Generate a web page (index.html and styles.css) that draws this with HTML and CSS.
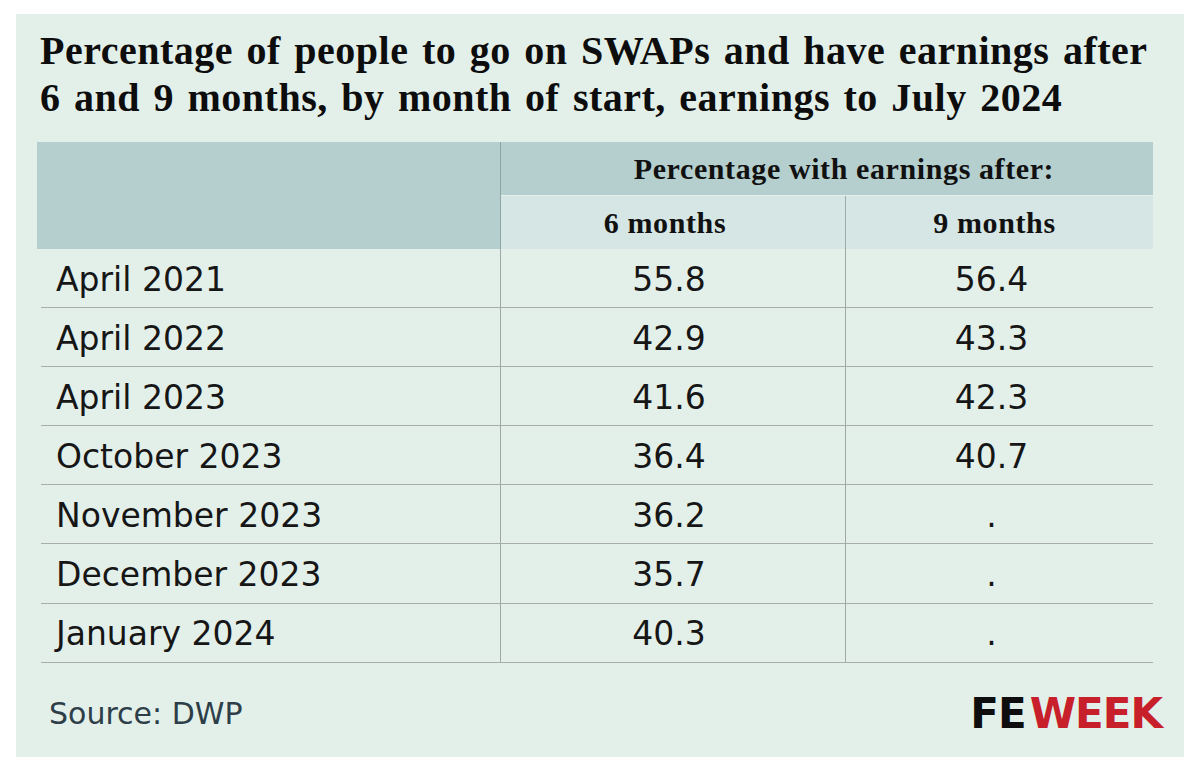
FILE: index.html
```html
<!DOCTYPE html>
<html>
<head>
<meta charset="utf-8">
<link rel="stylesheet" href="styles.css">
</head>
<body>
<div class="panel">
  <h1 class="title">Percentage of people to go on SWAPs and have earnings after<br>6 and 9 months, by month of start, earnings to July 2024</h1>
  <div class="table">
    <div class="h-blank"></div>
    <div class="h-group">Percentage with earnings after:</div>
    <div class="h-sub h-six">6 months</div>
    <div class="h-sub h-last">9 months</div>

    <div class="c first">April 2021</div><div class="c num">55.8</div><div class="c num last">56.4</div>
    <div class="c first">April 2022</div><div class="c num">42.9</div><div class="c num last">43.3</div>
    <div class="c first">April 2023</div><div class="c num">41.6</div><div class="c num last">42.3</div>
    <div class="c first">October 2023</div><div class="c num">36.4</div><div class="c num last">40.7</div>
    <div class="c first">November 2023</div><div class="c num">36.2</div><div class="c num last">.</div>
    <div class="c first">December 2023</div><div class="c num">35.7</div><div class="c num last">.</div>
    <div class="c first">January 2024</div><div class="c num">40.3</div><div class="c num last">.</div>
  </div>
  <div class="footer">
    <span class="source">Source: DWP</span>
    <span class="logo"><span class="fe">FE</span><span class="week">WEEK</span></span>
  </div>
</div>
</body>
</html>
```

FILE: styles.css
```css
html, body {
  margin: 0;
  padding: 0;
  background: #ffffff;
}
.panel {
  margin: 14px 0 0 16px;
  width: 1168px;
  height: 743px;
  background: #e3f0ea;
  box-sizing: border-box;
  padding: 13px 31px 0 21px;
}
.title {
  margin: 0 0 0 3px;
  font-family: "Liberation Serif", serif;
  font-weight: bold;
  font-size: 40px;
  line-height: 47px;
  letter-spacing: 0.5px;
  word-spacing: 3px;
  color: #0d0d0d;
  white-space: nowrap;
}
.table {
  margin-top: 21px;
  display: grid;
  grid-template-columns: 464px 345px 307px;
  grid-template-rows: 53px 54px;
  grid-auto-rows: 59.1px;
  font-family: "DejaVu Sans", sans-serif;
  color: #161616;
}
.h-blank {
  grid-row: 1 / 3;
  grid-column: 1;
  background: #b5cfcf;
  border-right: 1px solid #8fa6a6;
}
.h-group,
.h-sub {
  font-family: "Liberation Serif", serif;
  font-weight: bold;
  font-size: 30px;
  letter-spacing: 0.6px;
  display: flex;
  align-items: center;
  justify-content: center;
  color: #111;
}
.h-group {
  grid-column: 2 / 4;
  background: #b5cfcf;
  padding-left: 34px;
}
.h-sub {
  background: #d6e6e4;
  border-right: 1px solid #a0aaa8;
  margin-top: 1px;
}
.h-six {
  padding-right: 16px;
}
.h-sub.h-last {
  border-right: none;
  padding-right: 10px;
}
.c {
  border-bottom: 1.5px solid #a8aeab;
  display: flex;
  align-items: center;
  font-size: 33px;
  padding-top: 2px;
  box-sizing: border-box;
}
.c.first {
  margin-left: 4px;
  padding-left: 15px;
  border-right: 1px solid #a0a8a6;
}
.c.num {
  justify-content: center;
  border-right: 1px solid #a0a8a6;
  padding-right: 8px;
}
.c.num.last {
  border-right: none;
  padding-right: 16px;
}
.footer {
  display: flex;
  justify-content: space-between;
  align-items: center;
  margin-top: 26px;
  padding-left: 12px;
}
.source {
  font-family: "DejaVu Sans", sans-serif;
  font-size: 30px;
  color: #2e3e48;
}
.logo {
  font-family: "DejaVu Sans", sans-serif;
  font-weight: bold;
  font-size: 42px;
  letter-spacing: -1px;
  margin-right: -9px;
}
.fe {
  color: #0e0e0e;
  margin-right: 4px;
}
.week {
  color: #c8202a;
}
```
